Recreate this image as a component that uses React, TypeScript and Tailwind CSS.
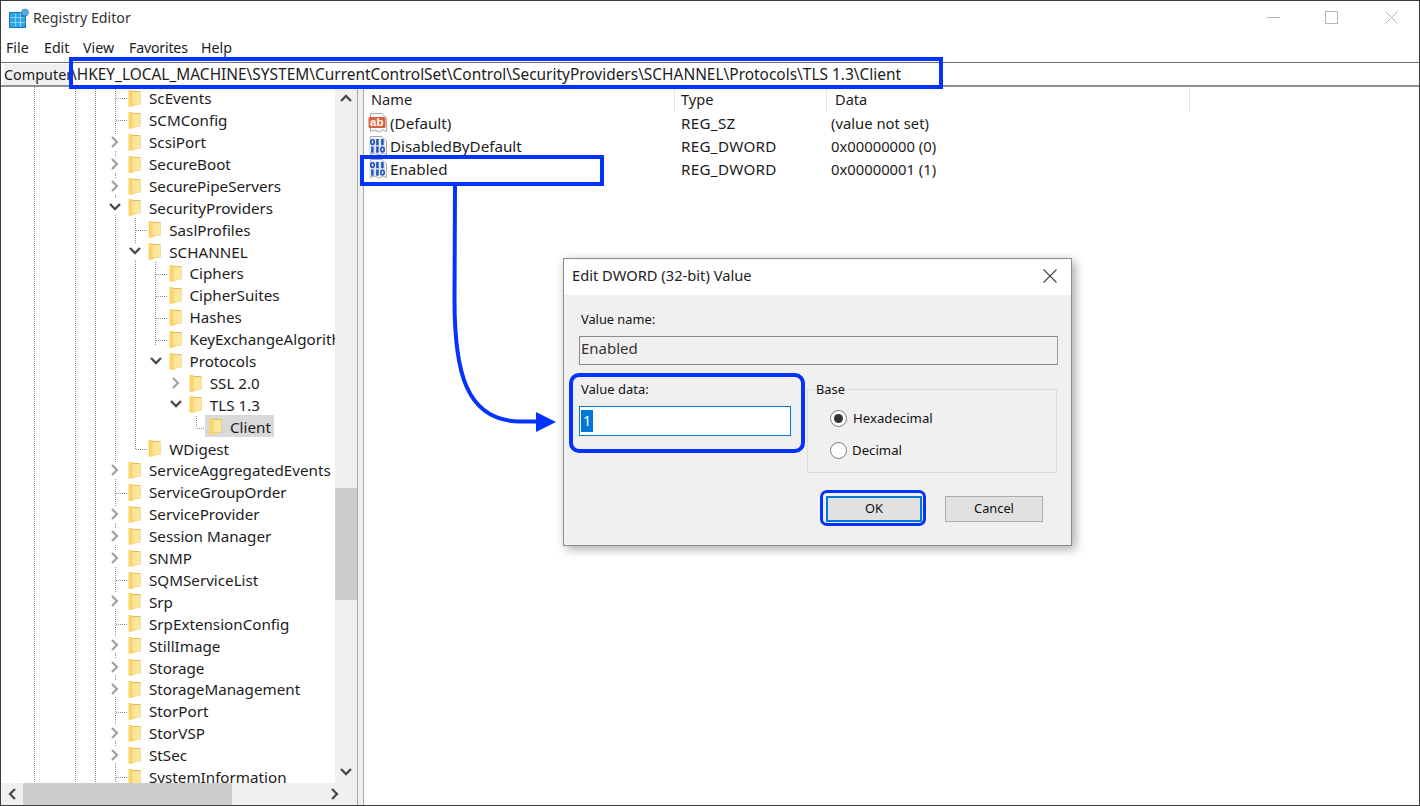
import React from "react";

const FONT = "font-['Noto_Sans','Open_Sans',sans-serif]";

type Row = { t: string; lvl: number; c?: "r" | "d"; sel?: boolean };
const rows: Row[] = [
  { t: "ScEvents", lvl: 1 },
  { t: "SCMConfig", lvl: 1 },
  { t: "ScsiPort", lvl: 1, c: "r" },
  { t: "SecureBoot", lvl: 1, c: "r" },
  { t: "SecurePipeServers", lvl: 1, c: "r" },
  { t: "SecurityProviders", lvl: 1, c: "d" },
  { t: "SaslProfiles", lvl: 2 },
  { t: "SCHANNEL", lvl: 2, c: "d" },
  { t: "Ciphers", lvl: 3 },
  { t: "CipherSuites", lvl: 3 },
  { t: "Hashes", lvl: 3 },
  { t: "KeyExchangeAlgorithms", lvl: 3 },
  { t: "Protocols", lvl: 3, c: "d" },
  { t: "SSL 2.0", lvl: 4, c: "r" },
  { t: "TLS 1.3", lvl: 4, c: "d" },
  { t: "Client", lvl: 5, sel: true },
  { t: "WDigest", lvl: 2 },
  { t: "ServiceAggregatedEvents", lvl: 1, c: "r" },
  { t: "ServiceGroupOrder", lvl: 1 },
  { t: "ServiceProvider", lvl: 1, c: "r" },
  { t: "Session Manager", lvl: 1, c: "r" },
  { t: "SNMP", lvl: 1, c: "r" },
  { t: "SQMServiceList", lvl: 1 },
  { t: "Srp", lvl: 1, c: "r" },
  { t: "SrpExtensionConfig", lvl: 1 },
  { t: "StillImage", lvl: 1, c: "r" },
  { t: "Storage", lvl: 1, c: "r" },
  { t: "StorageManagement", lvl: 1, c: "r" },
  { t: "StorPort", lvl: 1 },
  { t: "StorVSP", lvl: 1, c: "r" },
  { t: "StSec", lvl: 1, c: "r" },
  { t: "SystemInformation", lvl: 1 },
];

function Folder() {
  return (
    <svg width="13" height="18" viewBox="0 0 13 18" className="shrink-0">
      <path d="M1 2 L12.5 2 L12.5 15.5 L1 15.5 Z" fill="#e6bb55" />
      <path d="M3 3 L12 3 L12 15 L3 15 Z" fill="#fde59a" />
      <path d="M0.5 1 L4.5 1 L4.5 15.5 L9 15.5 L4 17.8 L0.5 17.8 Z" fill="#fad469" />
    </svg>
  );
}

function Chev({ dir, light }: { dir: "r" | "d" | "l" | "u"; light?: boolean }) {
  const rot = dir === "r" ? 0 : dir === "d" ? 90 : dir === "l" ? 180 : 270;
  return (
    <svg width="12" height="12" viewBox="0 0 12 12" style={{ transform: `rotate(${rot}deg)` }}>
      <path d="M3 1 L8 6 L3 11" fill="none" stroke={light ? "#a3a3a3" : "#4a4a4a"} strokeWidth="2.3" />
    </svg>
  );
}

function TreeRow({ r }: { r: Row }) {
  return (
    <div className="h-[21.9px] flex items-center" style={{ paddingLeft: 105 + (r.lvl - 1) * 20.25 }}>
      <div className="w-[18px] shrink-0 flex justify-center">
        {r.c ? (
          <span className="bg-white h-[16px] flex items-center">
            <Chev dir={r.c} light={r.c === "r"} />
          </span>
        ) : null}
      </div>
      <div className={`h-[21.9px] flex items-center pl-[4px] pr-[3px] shrink-0 ${r.sel ? "bg-[#d9d9d9]" : ""}`}>
        <Folder />
        <span className="ml-[8px] pt-[2px] text-[15.2px] leading-none text-[#1c1c1c] whitespace-nowrap">{r.t}</span>
      </div>
    </div>
  );
}

function TreeLines() {
  const dotted = { stroke: "#8c8c8c", strokeWidth: 1, strokeDasharray: "1 1", fill: "none" } as const;
  const v: [number, number, number][] = [
    [33.5, 0, 700],
    [74.5, 0, 700],
    [94.5, 0, 700],
    [114.5, 0, 700],
    [134.5, 131, 363],
    [154.5, 175, 258],
    [195.5, 329, 341],
  ];
  const h: [number, number, number][] = [
    [115, 127, 11],
    [115, 127, 33],
    [135, 147, 143],
    [135, 147, 362],
    [155, 167, 187],
    [155, 167, 209],
    [155, 167, 231],
    [155, 167, 253],
    [196, 207, 341],
    [115, 127, 406],
    [115, 127, 493],
    [115, 127, 537],
    [115, 127, 625],
    [115, 127, 690],
  ];
  return (
    <svg width="335" height="696" className="absolute left-0 top-0 pointer-events-none">
      {v.map(([x, a, b], i) => (
        <line key={i} x1={x} x2={x} y1={a} y2={b} {...dotted} />
      ))}
      {h.map(([a, b, y], i) => (
        <line key={i} x1={a} x2={b} y1={y + 0.5} y2={y + 0.5} {...dotted} />
      ))}
    </svg>
  );
}

function PaperIcon({ children }: { children: React.ReactNode }) {
  return (
    <svg width="20" height="20" viewBox="0 0 20 20" className="shrink-0">
      <path d="M2.5 0.5 L14 0.5 L18.5 5 L18.5 18.5 L15 17 L11 19 L7 17 L2.5 18.5 Z" fill="#fbfbfb" stroke="#a8a8a8" strokeWidth="1" />
      {children}
    </svg>
  );
}

function AbIcon() {
  return (
    <PaperIcon>
      <rect x="0.5" y="4" width="17" height="11" rx="1.5" fill="#dc5f3c" />
      <text x="2" y="13.2" fontFamily="Liberation Sans" fontWeight="700" fontSize="11.5" fill="#fff">ab</text>
    </PaperIcon>
  );
}

function BinIcon() {
  const c = "#1f4fb4";
  const Zero = ({ x, y }: { x: number; y: number }) => (
    <rect x={x + 0.8} y={y + 0.8} width="3.4" height="4.6" rx="1.6" fill="none" stroke={c} strokeWidth="1.6" />
  );
  const One = ({ x, y }: { x: number; y: number }) => <rect x={x + 1.2} y={y} width="2.4" height="6.2" fill={c} />;
  return (
    <PaperIcon>
      <rect x="1" y="2.5" width="16" height="14" fill="#dbe7f7" />
      <Zero x={2} y={3} />
      <One x={7} y={3} />
      <One x={12} y={3} />
      <One x={2} y={10.5} />
      <One x={7} y={10.5} />
      <Zero x={12} y={10.5} />
    </PaperIcon>
  );
}

function AppIcon() {
  const cells = [0, 1, 2];
  return (
    <svg width="20" height="20" viewBox="0 0 20 20" className="shrink-0">
      {cells.map((y) =>
        cells.map((x) => (
          <rect key={`${x}${y}`} x={1 + x * 5.4} y={5 + y * 4.9} width="5" height="4.5" fill={x === 2 && y === 0 ? "#1b7fc4" : "#2aa5ea"} />
        ))
      )}
      <rect x="0.5" y="4.5" width="16" height="15" fill="none" stroke="#1a75b8" strokeWidth="1" />
      <circle cx="16" cy="4.5" r="3.4" fill="#55aee0" stroke="#2a85bd" strokeWidth="0.8" />
    </svg>
  );
}

function Radio({ on }: { on?: boolean }) {
  return (
    <span className="w-[17px] h-[17px] rounded-full border border-[#7a7a7a] bg-white flex items-center justify-center shrink-0">
      {on ? <span className="w-[9px] h-[9px] rounded-full bg-[#333]" /> : null}
    </span>
  );
}

function Dialog() {
  return (
    <div className="absolute left-[562px] top-[257px] w-[509px] h-[288px] border border-[#8c8c8c] bg-[#f0f0f0] shadow-[3px_3px_10px_rgba(0,0,0,0.35)] flex flex-col">
      <div className="h-[36px] bg-white flex items-center justify-between pl-[8px] pr-[14px] pb-[3px] shrink-0">
        <span className="text-[14.7px] text-[#222]">Edit DWORD (32-bit) Value</span>
        <svg width="14" height="14" viewBox="0 0 14 14">
          <path d="M0.5 0.5 L13.5 13.5 M13.5 0.5 L0.5 13.5" stroke="#444" strokeWidth="1.1" />
        </svg>
      </div>
      <div className="flex flex-col pl-[15px] pr-[13px]">
        <span className="mt-[16px] ml-[2px] text-[12.8px] leading-[17px] text-[#111]">Value name:</span>
        <div className="mt-[8px] h-[29px] border border-[#8a8a8a] border-r-[#9a9a9a] bg-[#f0f0f0] flex items-center pl-[1px] pb-[5px] text-[15px] text-[#333]">
          Enabled
        </div>
        <div className="flex mt-[24px] gap-[16px]">
          <div className="flex flex-col w-[212px] -mt-[8px]">
            <span className="ml-[2px] text-[13px] leading-[17px] text-[#111]">Value data:</span>
            <div className="mt-[8px] h-[30px] border border-[#0078d7] bg-white flex items-center pl-[1px]">
              <span className="bg-[#0078d7] text-white text-[14.4px] leading-[22px] px-[2px]">1</span>
            </div>
          </div>
          <div className="relative w-[250px] h-[84px] border border-[#dcdcdc]">
            <span className="absolute left-[6px] -top-[9px] bg-[#f0f0f0] px-[2px] text-[12.8px] leading-[17px] text-[#111]">Base</span>
            <div className="flex flex-col pl-[22px] pt-[20px] gap-[15px]">
              <label className="flex items-center gap-[6px] h-[17px] text-[13.2px] text-[#111]">
                <Radio on />
                Hexadecimal
              </label>
              <label className="flex items-center gap-[5px] h-[17px] text-[13.2px] text-[#111]">
                <Radio />
                Decimal
              </label>
            </div>
          </div>
        </div>
        <div className="flex justify-end mt-[23px] pr-[15px] gap-[23px]">
          <button className="w-[96px] h-[26px] border-2 border-[#0078d7] bg-[#e1e1e1] text-[12.8px] text-[#111]">OK</button>
          <button className="w-[98px] h-[26px] border border-[#adadad] bg-[#e1e1e1] text-[12.8px] text-[#111]">Cancel</button>
        </div>
      </div>
    </div>
  );
}

export default function App() {
  return (
    <div className={`relative w-[1420px] h-[806px] overflow-hidden bg-white border border-[#3c3c3c] flex flex-col ${FONT}`}>
      {/* title bar */}
      <div className="h-[35px] shrink-0 flex items-center pl-[8px] pr-[21px] pb-[2px]">
        <AppIcon />
        <span className="ml-[4px] text-[14.2px] text-[#333]">Registry Editor</span>
        <div className="ml-auto flex items-center gap-[47px]">
          <svg width="13" height="13" viewBox="0 0 13 13" className="-mr-[2px]"><path d="M0 6.5 L13 6.5" stroke="#b5b5b5" strokeWidth="1" /></svg>
          <svg width="13" height="13" viewBox="0 0 13 13"><rect x="0.5" y="0.5" width="12" height="12" fill="none" stroke="#b5b5b5" strokeWidth="1" /></svg>
          <svg width="13" height="13" viewBox="0 0 13 13"><path d="M0.5 0.5 L12.5 12.5 M12.5 0.5 L0.5 12.5" stroke="#b5b5b5" strokeWidth="1" /></svg>
        </div>
      </div>
      {/* menu */}
      <div className="h-[26px] shrink-0 flex items-center pl-[5px] text-[14.2px] text-[#1c1c1c] pb-[2px]">
        <span className="w-[38px]">File</span>
        <span className="w-[39px]">Edit</span>
        <span className="w-[46px]">View</span>
        <span className="w-[72px] tracking-[-0.2px]">Favorites</span>
        <span>Help</span>
      </div>
      {/* address */}
      <div className="h-[25px] shrink-0 border-t border-b-2 border-t-[#6e6e6e] border-b-[#8f8f8f] flex items-center pl-[3px] pt-[1px] text-[15.45px] text-[#1c1c1c]">
        <span className="bg-[#f0f0f0] w-[66px] mr-[1px] overflow-hidden whitespace-nowrap text-[14.4px]">Computer</span>
        <span className="whitespace-nowrap">{"\\HKEY_LOCAL_MACHINE\\SYSTEM\\CurrentControlSet\\Control\\SecurityProviders\\SCHANNEL\\Protocols\\TLS 1.3\\Client"}</span>
      </div>
      {/* main */}
      <div className="flex-1 flex min-h-0">
        <div className="w-[356px] shrink-0 flex flex-col">
          <div className="flex-1 flex min-h-0">
            <div className="relative w-[334px] overflow-hidden">
              <TreeLines />
              <div className="relative">
                {rows.map((r) => (
                  <TreeRow key={r.t} r={r} />
                ))}
              </div>
            </div>
            <div className="w-[22px] bg-[#f0f0f0] flex flex-col items-center">
              <div className="h-[22px] flex items-center justify-center"><Chev dir="u" /></div>
              <div className="h-[379px]" />
              <div className="w-full h-[112px] bg-[#cdcdcd]" />
              <div className="flex-1" />
              <div className="h-[22px] flex items-center justify-center"><Chev dir="d" /></div>
            </div>
          </div>
          <div className="h-[22px] shrink-0 bg-[#f0f0f0] flex items-center">
            <div className="w-[22px] flex justify-center"><Chev dir="l" /></div>
            <div className="w-[209px] h-full bg-[#cdcdcd]" />
            <div className="flex-1" />
            <div className="w-[24px] flex justify-center"><Chev dir="r" /></div>
            <div className="w-[10px]" />
          </div>
        </div>
        <div className="w-[7px] shrink-0 bg-[#f0f0f0] border-x border-[#a8a8a8]" />
        <div className="flex-1 flex flex-col text-[15.2px] text-[#1c1c1c]">
          <div className="h-[25px] flex items-center text-[14.6px]">
            <span className="w-[311px] pl-[7px] border-r border-[#e5e5e5] h-full flex items-center">Name</span>
            <span className="w-[152px] pl-[6px] border-r border-[#e5e5e5] h-full flex items-center">Type</span>
            <span className="w-[363px] pl-[8px] border-r border-[#e5e5e5] h-full flex items-center">Data</span>
          </div>
          {[
            { i: <AbIcon />, n: "(Default)", t: "REG_SZ", d: "(value not set)" },
            { i: <BinIcon />, n: "DisabledByDefault", t: "REG_DWORD", d: "0x00000000 (0)" },
            { i: <BinIcon />, n: "Enabled", t: "REG_DWORD", d: "0x00000001 (1)" },
          ].map((r) => (
            <div key={r.n} className="h-[23px] flex items-center">
              <div className="w-[311px] pl-[4px] flex items-center gap-[2px]">
                {r.i}
                <span>{r.n}</span>
              </div>
              <span className="w-[152px] pl-[6px] tracking-[0.3px]">{r.t}</span>
              <span className="pl-[4px] text-[14.8px]">{r.d}</span>
            </div>
          ))}
        </div>
      </div>

      {/* annotation: arrow */}
      <svg width="1420" height="806" className="absolute -left-px -top-px pointer-events-none">
        <path d="M455 185 L454.5 300 C454.5 370 465 421 520 421.5 L538 421.5" fill="none" stroke="#0433ff" strokeWidth="4" />
        <path d="M536 412 L556 422 L536 432 Z" fill="#0433ff" />
      </svg>

      <Dialog />

      {/* annotation: highlight boxes */}
      <div className="absolute left-[68px] top-[56px] w-[874px] h-[32px] border-4 border-[#0433ff]" />
      <div className="absolute left-[359px] top-[154px] w-[244px] h-[31px] border-4 border-[#0433ff]" />
      <div className="absolute left-[568px] top-[372px] w-[236px] h-[80px] border-4 border-[#0433ff] rounded-[10px]" />
      <div className="absolute left-[819px] top-[489px] w-[106px] h-[36px] border-[3px] border-[#0433ff] rounded-[7px]" />
    </div>
  );
}
